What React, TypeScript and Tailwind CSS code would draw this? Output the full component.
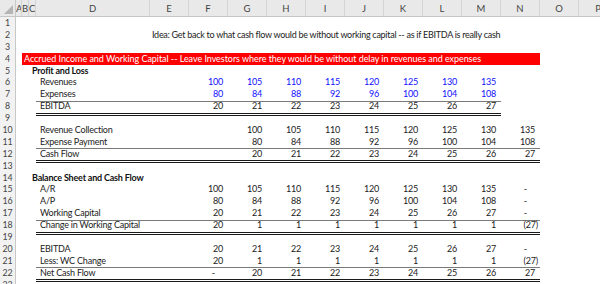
import React from "react";

type Cell = string | number | null;

const COLS = ["A", "B", "C", "D", "E", "F", "G", "H", "I", "J", "K", "L", "M", "N", "O", "P"];
const GRID = "grid grid-cols-[16px_6px_7px_7px_114px_repeat(12,39px)]";

const seq = (start: number, step: number) => Array.from({ length: 8 }, (_, i) => start + step * i);

// values are for columns F..N (9 cells)
type Row = {
  n: number;
  title?: string;
  label?: string;
  vals?: Cell[];
  blue?: boolean;
  line?: "thin" | "double";
  lineTo?: "M" | "N";
};

const rows: Row[] = [
  { n: 1 },
  { n: 2 },
  { n: 3 },
  { n: 4 },
  { n: 5, title: "Profit and Loss" },
  { n: 6, label: "Revenues", vals: [...seq(100, 5), null], blue: true },
  { n: 7, label: "Expenses", vals: [...seq(80, 4), null], blue: true, line: "thin", lineTo: "M" },
  { n: 8, label: "EBITDA", vals: [...seq(20, 1), null], line: "double", lineTo: "M" },
  { n: 9 },
  { n: 10, label: "Revenue Collection", vals: [null, ...seq(100, 5)] },
  { n: 11, label: "Expense Payment", vals: [null, ...seq(80, 4)], line: "thin", lineTo: "N" },
  { n: 12, label: "Cash Flow", vals: [null, ...seq(20, 1)], line: "double", lineTo: "N" },
  { n: 13 },
  { n: 14, title: "Balance Sheet and Cash Flow" },
  { n: 15, label: "A/R", vals: [...seq(100, 5), "-"] },
  { n: 16, label: "A/P", vals: [...seq(80, 4), "-"] },
  { n: 17, label: "Working Capital", vals: [...seq(20, 1), "-"], line: "thin", lineTo: "N" },
  { n: 18, label: "Change in Working Capital", vals: [20, 1, 1, 1, 1, 1, 1, 1, "(27)"], line: "double", lineTo: "N" },
  { n: 19 },
  { n: 20, label: "EBITDA", vals: [...seq(20, 1), "-"] },
  { n: 21, label: "Less: WC Change", vals: [20, 1, 1, 1, 1, 1, 1, 1, "(27)"], line: "thin", lineTo: "N" },
  { n: 22, label: "Net Cash Flow", vals: ["-", ...seq(20, 1)], line: "double", lineTo: "N" },
  { n: 23 },
];

const lineCls = (r: Row, colIdx: number) => {
  // colIdx: 3 = D ... 12 = M, 13 = N
  if (!r.line) return "";
  const last = r.lineTo === "N" ? 13 : 12;
  if (colIdx < 3 || colIdx > last) return "";
  return r.line === "thin" ? "border-b border-[#7a7a7a]" : "border-b-[3px] border-double border-[#1a1a1a]";
};

const NumCell = ({ v, blue }: { v: Cell; blue?: boolean }) => {
  if (v === null) return null;
  const s = String(v);
  const pad = s === "-" ? "pr-[13px]" : s.startsWith("(") ? "pr-[2px]" : "pr-[5px]";
  return (
    <div className={`text-right ${pad} ${blue ? "text-[#1010ff]" : "text-[#222]"}`}>{s}</div>
  );
};

const RowNum = ({ n }: { n: number }) => (
  <div className="bg-[#f2f2f2] border-r border-[#c8c8c8] border-b border-b-[#e2e2e2] text-[#444] text-[8.8px] tracking-normal text-center">
    {n}
  </div>
);

const SheetRow = ({ r }: { r: Row }) => (
  <div className={`${GRID} h-[11.9px] leading-[12.4px]`}>
    <RowNum n={r.n} />
    {COLS.map((c, i) => {
      let content: React.ReactNode = null;
      if (r.n === 2 && c === "E") {
        content = (
          <div className="whitespace-nowrap pl-[2px] text-[#222] tracking-[-0.27px]">
            Idea: Get back to what cash flow would be without working capital -- as if EBITDA is really cash
          </div>
        );
      }
      if (r.title && c === "C") {
        content = <div className="whitespace-nowrap pl-[3px] font-bold text-[#111]">{r.title}</div>;
      }
      if (r.label && c === "D") {
        content = <div className="whitespace-nowrap pl-[4px] text-[#222]">{r.label}</div>;
      }
      if (r.vals && i >= 5 && i <= 13) {
        content = <NumCell v={r.vals[i - 5]} blue={r.blue} />;
      }
      return (
        <div key={c} className={`min-w-0 ${lineCls(r, i)}`}>
          {content}
        </div>
      );
    })}
  </div>
);

export default function App() {
  return (
    <div
      className="w-[600px] h-[284px] overflow-hidden bg-white text-[9px] tracking-[-0.2px]"
      style={{ fontFamily: "Lato, 'Liberation Sans', sans-serif" }}
    >
      {/* column headers */}
      <div className={`${GRID} h-[17px] bg-[#e9e9e9] border-b border-[#c6c6c6] text-[#444] text-[9.5px] tracking-normal leading-[17px]`}>
        <div className="relative border-r border-[#c8c8c8]">
          <div className="absolute right-[2px] bottom-[2px] w-0 h-0 border-l-[9px] border-l-transparent border-b-[9px] border-b-[#b4b4b4]" />
        </div>
        {COLS.map((c) => (
          <div key={c} className="text-center border-r border-[#d4d4d4] overflow-hidden">
            {c}
          </div>
        ))}
      </div>

      {rows.map((r) =>
        r.n === 4 ? (
          <div key={r.n} className={`${GRID} h-[11.9px] leading-[12.4px]`}>
            <RowNum n={4} />
            <div />
            <div className="col-span-13 bg-[#ff0000] text-white whitespace-nowrap pl-[2px] h-[11.9px] tracking-[-0.05px]">
              Accrued Income and Working Capital -- Leave Investors where they would be without delay in revenues and expenses
            </div>
          </div>
        ) : (
          <SheetRow key={r.n} r={r} />
        )
      )}
    </div>
  );
}
